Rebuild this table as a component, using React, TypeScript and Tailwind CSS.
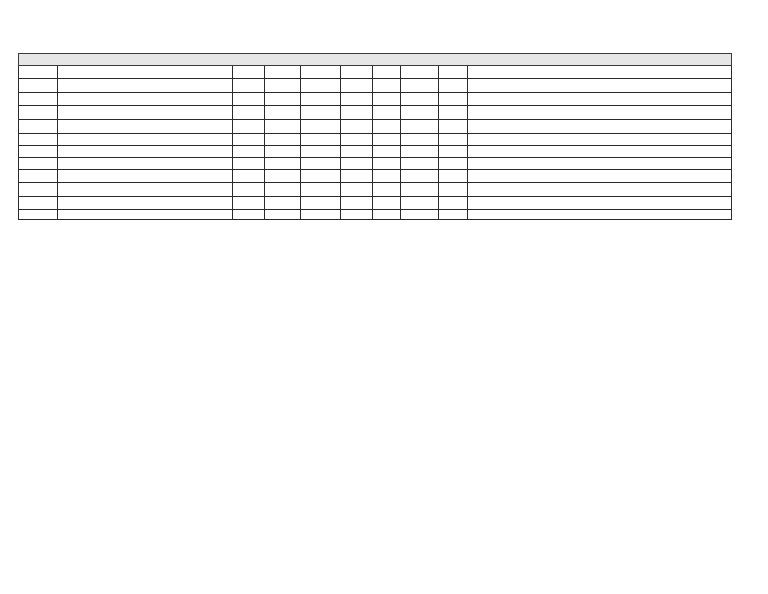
// column widths & row heights written as full class names so Tailwind picks them up
const cols = ['w-[39px]', 'w-[175px]', 'w-[32px]', 'w-[36px]', 'w-[40px]', 'w-[32px]', 'w-[28px]', 'w-[38px]', 'w-[29px]', 'w-[264px]'];
const rows = ['h-[13px]', 'h-[14px]', 'h-[13px]', 'h-[14px]', 'h-[14px]', 'h-[12px]', 'h-[12px]', 'h-[12px]', 'h-[13px]', 'h-[14px]', 'h-[13px]', 'h-[10px]'];

export default function App() {
  return (
    <div className="min-h-[594px] w-[768px] bg-white pl-[18px] pt-[53px] font-['Liberation_Sans',Arial,sans-serif]">
      <table className="w-[714px] table-fixed border-collapse border border-[#3a3a3a] text-[9px]">
        <colgroup>
          {cols.map((w, i) => (
            <col key={i} className={w} />
          ))}
        </colgroup>
        <thead>
          <tr className="h-[12px]">
            <th colSpan={cols.length} className="border border-[#3a3a3a] bg-[#e6e6e6] p-0"></th>
          </tr>
        </thead>
        <tbody>
          {rows.map((h, r) => (
            <tr key={r} className={h}>
              {cols.map((_, c) => (
                <td key={c} className="border border-[#2a2a2a] p-0"></td>
              ))}
            </tr>
          ))}
        </tbody>
      </table>
    </div>
  );
}
